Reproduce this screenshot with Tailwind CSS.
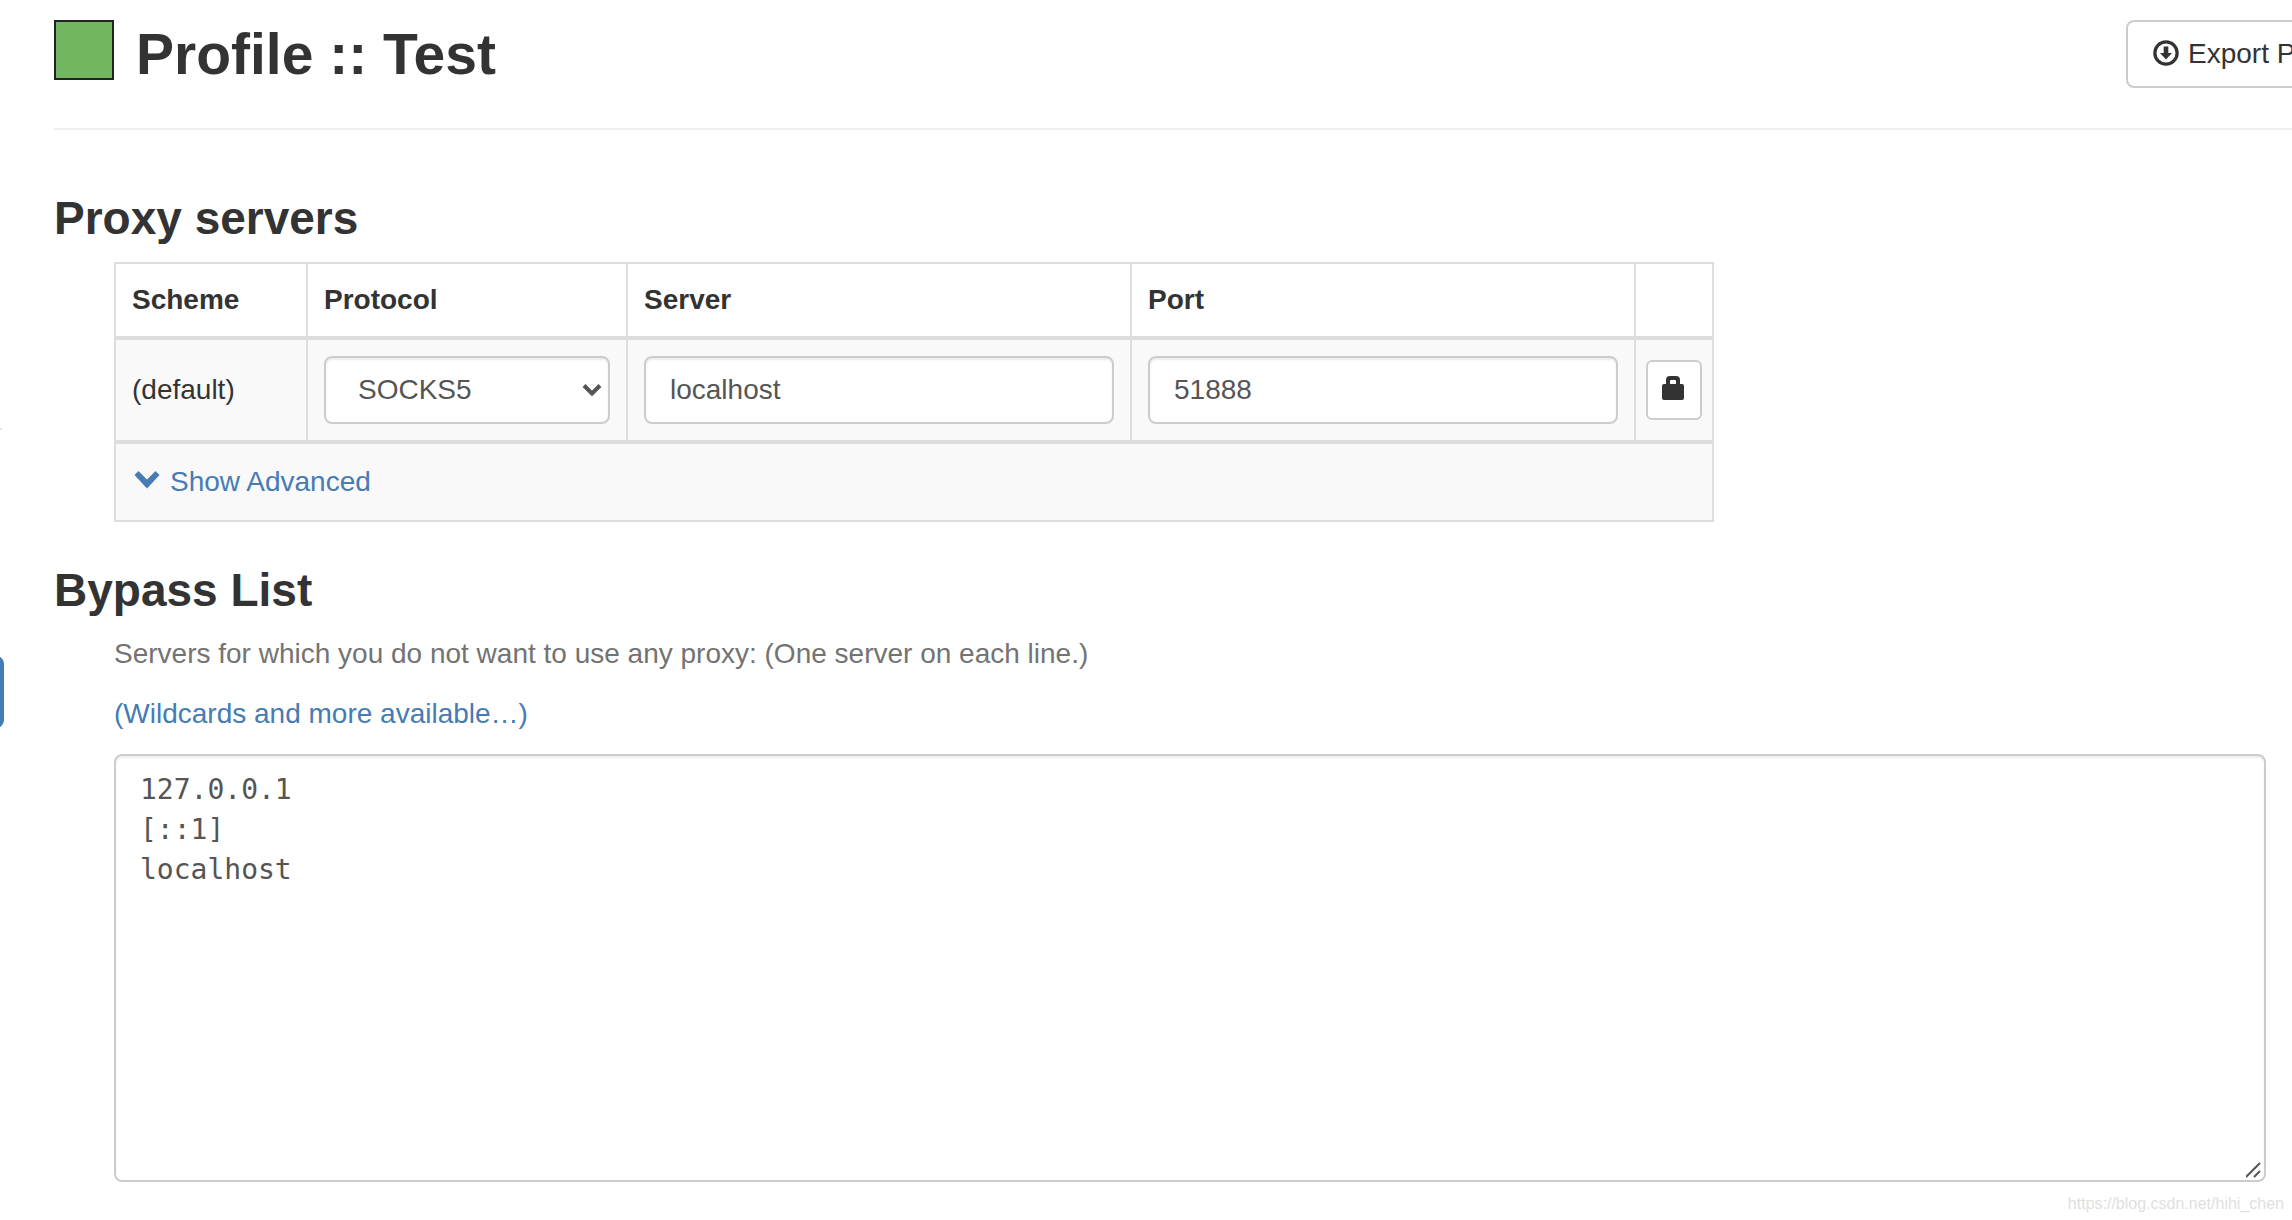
<!DOCTYPE html>
<html lang="en">
<head>
    <meta charset="UTF-8">
    <meta name="viewport" content="width=device-width, initial-scale=1.0">
    <title>Profile :: Test</title>
    <script src="https://cdn.jsdelivr.net/npm/@tailwindcss/browser@4"></script>
</head>
<body class="relative min-h-screen overflow-x-hidden bg-white font-['Liberation_Sans',Arial,sans-serif] text-[28px] leading-10 text-[#333]">
    <!-- right edge of the side navigation -->
    <div class="absolute left-0 top-[428px] h-0.5 w-0.5 bg-[#e5e5e5]"></div>
    <div class="absolute -left-5 top-[656px] h-[72px] w-6 rounded-lg bg-[#467bb4]"></div>

    <main class="flex flex-col pl-[54px] pt-5">
        <header class="mb-5 flex items-start justify-between border-b-2 border-[#eee] pb-10">
            <div class="flex items-start gap-[22px]">
                <span class="size-[60px] border-2 border-[#222] bg-[#71b762]"></span>
                <h1 class="text-[57px] font-bold leading-[68px]">Profile :: Test</h1>
            </div>
            <div class="w-[166px] shrink-0 overflow-hidden">
                <button type="button" class="flex h-[68px] w-max items-center gap-2 rounded-lg border-2 border-[#ccc] bg-white px-6">
                    <svg class="size-7 pb-0.5" viewBox="0 0 28 28" fill="none">
                        <circle cx="14" cy="14" r="12" stroke="#333" stroke-width="3.500"/>
                        <path d="M11.500 7h5v7h4l-6.500 7-6.500-7h4z" fill="#333"/>
                    </svg>
                    Export PAC
                </button>
            </div>
        </header>

        <!-- Proxy servers -->
        <section>
            <h2 class="mb-[18px] mt-[42px] text-[46px] font-bold leading-[52px]">Proxy servers</h2>
            <table class="ml-[60px] w-[1600px] table-fixed border-separate border-spacing-0 border-2 border-[#ddd] text-left">
                <colgroup>
                    <col class="w-[192px]">
                    <col class="w-[320px]">
                    <col class="w-[504px]">
                    <col class="w-[504px]">
                    <col>
                </colgroup>
                <thead>
                    <tr class="h-[76px]">
                        <th class="border-b-4 border-r-2 border-[#ddd] px-4 font-bold">Scheme</th>
                        <th class="border-b-4 border-r-2 border-[#ddd] px-4 font-bold">Protocol</th>
                        <th class="border-b-4 border-r-2 border-[#ddd] px-4 font-bold">Server</th>
                        <th class="border-b-4 border-r-2 border-[#ddd] px-4 font-bold">Port</th>
                        <th class="border-b-4 border-[#ddd]"></th>
                    </tr>
                </thead>
                <tbody class="bg-[#f9f9f9]">
                    <tr class="h-[104px]">
                        <td class="border-b-4 border-r-2 border-[#ddd] px-4">(default)</td>
                        <td class="border-b-4 border-r-2 border-[#ddd] px-4">
                            <div class="relative">
                                <select aria-label="Protocol" class="block h-[68px] w-full appearance-none rounded-lg border-2 border-[#ccc] bg-white px-8 text-[#555] shadow-[inset_0_2px_2px_rgba(0,0,0,0.075)]">
                                    <option>HTTP</option>
                                    <option>HTTPS</option>
                                    <option>SOCKS4</option>
                                    <option selected>SOCKS5</option>
                                </select>
                                <svg class="pointer-events-none absolute right-2 top-7 h-3 w-5" viewBox="0 0 20 12" fill="none" stroke="#555" stroke-width="4">
                                    <path d="M2 1.500l8 8 8-8"/>
                                </svg>
                            </div>
                        </td>
                        <td class="border-b-4 border-r-2 border-[#ddd] px-4">
                            <input type="text" aria-label="Server" value="localhost" class="block h-[68px] w-full rounded-lg border-2 border-[#ccc] bg-white px-6 text-[#555] shadow-[inset_0_2px_2px_rgba(0,0,0,0.075)]">
                        </td>
                        <td class="border-b-4 border-r-2 border-[#ddd] px-4">
                            <input type="text" aria-label="Port" value="51888" class="block h-[68px] w-full rounded-lg border-2 border-[#ccc] bg-white px-6 text-[#555] shadow-[inset_0_2px_2px_rgba(0,0,0,0.075)]">
                        </td>
                        <td class="border-b-4 border-[#ddd] px-2.5">
                            <button type="button" aria-label="Authentication" class="flex h-[60px] w-full justify-start rounded-md border-2 border-[#ccc] bg-white pl-3.5 pt-3.5">
                                <svg class="h-6 w-[22px]" viewBox="0 0 22 24" fill="#333">
                                    <path fill-rule="evenodd" d="M4 8V4q0-4 4-4h6q4 0 4 4v4h2q2 0 2 2v12q0 2-2 2H2q-2 0-2-2V10q0-2 2-2zM8 8h6V5q0-1-1-1H9q-1 0-1 1z"/>
                                </svg>
                            </button>
                        </td>
                    </tr>
                    <tr class="h-[76px]">
                        <td colspan="5" class="px-4">
                            <a href="#" class="flex items-center gap-2.5 text-[#467bb4]">
                                <svg class="size-7" viewBox="0 0 28 28" fill="currentColor">
                                    <path d="M6.500 3l8.500 8.500 8.500-8.500 4 4L15 20.500 2.500 7z"/>
                                </svg>
                                Show Advanced
                            </a>
                        </td>
                    </tr>
                </tbody>
            </table>
        </section>

        <!-- Bypass list -->
        <section>
            <h2 class="mb-[18px] mt-[42px] text-[46px] font-bold leading-[52px]">Bypass List</h2>
            <div class="ml-[60px] mr-[26px] flex flex-col gap-5">
                <label for="bypass-list" class="text-[#737373]">Servers for which you do not want to use any proxy: (One server on each line.)</label>
                <a href="#" class="self-start text-[#467bb4]">(Wildcards and more available…)</a>
                <div class="relative">
                    <textarea id="bypass-list" rows="10" spellcheck="false" class="block h-[428px] w-full resize-none rounded-lg border-2 border-[#ccc] bg-white px-6 py-3.5 font-['DejaVu_Sans_Mono',monospace] leading-10 text-[#555] shadow-[inset_0_2px_2px_rgba(0,0,0,0.075)]">127.0.0.1
[::1]
localhost</textarea>
                    <svg class="pointer-events-none absolute bottom-1 right-1 size-4" viewBox="0 0 16 16" stroke="#555" stroke-width="2">
                        <path d="M0 15L14 1M8 15l6-6"/>
                    </svg>
                </div>
            </div>
        </section>
    </main>

    <p class="absolute bottom-1 right-2 text-base leading-6 text-[#e0e0e0]">https://blog.csdn.net/hihi_chen</p>
</body>
</html>
